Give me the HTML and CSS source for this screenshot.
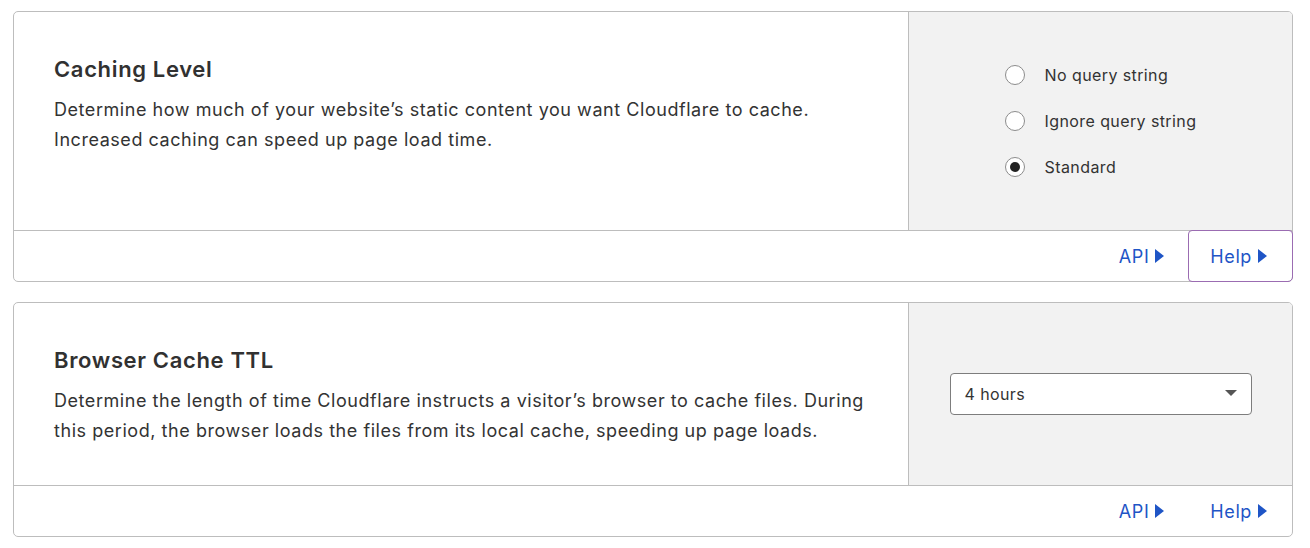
FILE: index.html
```html
<!DOCTYPE html>
<html lang="en">
<head>
<meta charset="utf-8">
<title>Caching settings</title>
<link rel="stylesheet" href="styles.css">
</head>
<body>
<div class="page">
  <section class="card">
    <div class="card-main">
      <div class="card-text">
        <h2 class="title">Caching Level</h2>
        <p class="desc">Determine how much of your website’s static content you want Cloudflare to cache.<br>Increased caching can speed up page load time.</p>
      </div>
      <div class="card-control">
        <div class="radios">
          <label class="radio"><span class="circle"></span><span>No query string</span></label>
          <label class="radio"><span class="circle"></span><span>Ignore query string</span></label>
          <label class="radio"><span class="circle checked"></span><span>Standard</span></label>
        </div>
      </div>
    </div>
    <div class="card-footer">
      <a class="link">API<span class="tri"></span></a>
      <a class="link focused">Help<span class="tri"></span></a>
    </div>
  </section>

  <section class="card">
    <div class="card-main">
      <div class="card-text">
        <h2 class="title">Browser Cache TTL</h2>
        <p class="desc">Determine the length of time Cloudflare instructs a visitor’s browser to cache files. During<br>this period, the browser loads the files from its local cache, speeding up page loads.</p>
      </div>
      <div class="card-control">
        <div class="select">
          <span>4 hours</span>
          <span class="caret"></span>
        </div>
      </div>
    </div>
    <div class="card-footer">
      <a class="link">API<span class="tri"></span></a>
      <a class="link">Help<span class="tri"></span></a>
    </div>
  </section>
</div>
</body>
</html>
```

FILE: styles.css
```css
* { box-sizing: border-box; }
html, body { margin: 0; padding: 0; background: #fff; }
body {
  font-family: Inter, "Noto Sans", "Liberation Sans", sans-serif;
  color: #333;
}
.page {
  padding: 11px 0 0 13px;
  display: flex;
  flex-direction: column;
  gap: 20px;
}
.card {
  width: 1280px;
  border: 1px solid #bdbdbd;
  border-radius: 5px;
  background: #fff;
}
.card-main {
  display: grid;
  grid-template-columns: 1fr 384px;
  border-bottom: 1px solid #bdbdbd;
}
.card-text {
  padding: 42px 40px 39px 40px;
}
.title {
  margin: 0 0 11px 0;
  font-size: 22px;
  line-height: 30px;
  font-weight: 600;
  color: #313131;
  letter-spacing: 0.65px;
}
.desc {
  margin: 0;
  font-size: 18px;
  line-height: 30px;
  color: #333;
  letter-spacing: 0.55px;
}
.card-control {
  background: #f2f2f2;
  border-left: 1px solid #bdbdbd;
  border-top-right-radius: 4px;
  display: flex;
  align-items: center;
  justify-content: center;
  padding: 40px;
}
.radios { display: flex; flex-direction: column; }
.radio {
  height: 46px;
  display: flex;
  align-items: center;
  gap: 20px;
  font-size: 16px;
  color: #333;
  letter-spacing: 0.4px;
}
.circle {
  width: 20px;
  height: 20px;
  border-radius: 50%;
  border: 1px solid #8c8c8c;
  background: #fff;
  display: flex;
  align-items: center;
  justify-content: center;
}
.circle.checked::after {
  content: "";
  width: 10px;
  height: 10px;
  border-radius: 50%;
  background: #222;
}
.select {
  width: 302px;
  height: 42px;
  background: #fff;
  border: 1px solid #7d7d7d;
  border-radius: 4px;
  display: flex;
  align-items: center;
  justify-content: space-between;
  padding: 0 14px 0 14px;
  font-size: 16px;
  color: #333;
  letter-spacing: 0.4px;
}
.caret {
  width: 0;
  height: 0;
  border-left: 6px solid transparent;
  border-right: 6px solid transparent;
  border-top: 6px solid #555;
  margin-top: -2px;
}
.card-footer {
  height: 50px;
  display: flex;
  justify-content: flex-end;
}
.link {
  display: flex;
  align-items: center;
  padding: 0 25px 0 21px;
  font-size: 18px;
  color: #1f55c6;
  cursor: pointer;
  border-radius: 3px;
  letter-spacing: 0.6px;
}
.link.focused {
  outline: 1px solid #9b6cb2;
  border-bottom-right-radius: 4px;
}
.tri {
  width: 0;
  height: 0;
  border-top: 7px solid transparent;
  border-bottom: 7px solid transparent;
  border-left: 9px solid #1f55c6;
  margin-left: 6px;
}
```
